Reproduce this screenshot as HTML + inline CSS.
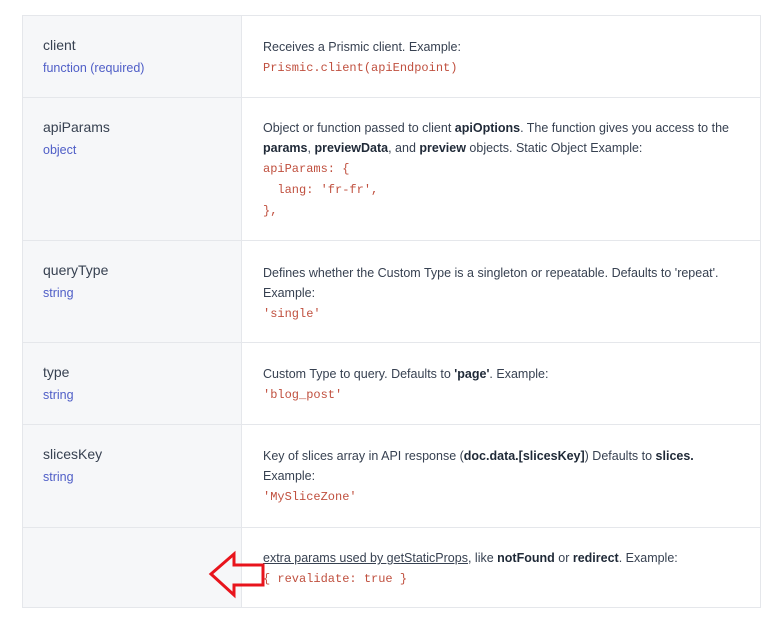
<!DOCTYPE html>
<html><head><style>
body{margin:0;background:#fff;width:782px;height:629px;position:relative;font-family:"Liberation Sans",sans-serif;overflow:hidden}
.t{position:absolute;left:22px;top:15px;width:739px;height:593px;border:1px solid #e5e7eb;box-sizing:border-box}
.l{position:absolute;left:22px;width:220px;background:#f6f7f9;border-right:1px solid #e5e7eb;box-sizing:border-box}
.h{position:absolute;left:22px;width:739px;height:1px;background:#e5e7eb}
.n{position:absolute;left:43px;font-size:14px;color:#374151}
.ty{position:absolute;left:43px;font-size:12.5px;color:#4f5ec7}
.d{position:absolute;left:263px;width:476px;font-size:12.5px;line-height:20px;color:#374151}
.d b{color:#1f2937}
code{font-family:"Liberation Mono",monospace;font-size:12px;color:#c0503f;white-space:pre}
</style></head><body>
<div class="l" style="top:15px;height:593px"></div>
<div class="t"></div>
<div class="h" style="top:97px"></div>
<div class="h" style="top:240px"></div>
<div class="h" style="top:342px"></div>
<div class="h" style="top:424px"></div>
<div class="h" style="top:527px"></div>

<div class="n" style="top:37px">client</div>
<div class="ty" style="top:61px">function (required)</div>
<div class="d" style="top:37px">Receives a Prismic client. Example:<br><code>Prismic.client(apiEndpoint)</code></div>

<div class="n" style="top:119px">apiParams</div>
<div class="ty" style="top:143px">object</div>
<div class="d" style="top:118px">Object or function passed to client <b>apiOptions</b>. The function gives you access to the <b>params</b>, <b>previewData</b>, and <b>preview</b> objects. Static Object Example:<br><code>apiParams: {
  lang: 'fr-fr',
},</code></div>

<div class="n" style="top:262px">queryType</div>
<div class="ty" style="top:286px">string</div>
<div class="d" style="top:263px">Defines whether the Custom Type is a singleton or repeatable. Defaults to 'repeat'. Example:<br><code>'single'</code></div>

<div class="n" style="top:364px">type</div>
<div class="ty" style="top:388px">string</div>
<div class="d" style="top:364px">Custom Type to query. Defaults to <b>'page'</b>. Example:<br><code>'blog_post'</code></div>

<div class="n" style="top:446px">slicesKey</div>
<div class="ty" style="top:470px">string</div>
<div class="d" style="top:446px">Key of slices array in API response (<b>doc.data.[slicesKey]</b>) Defaults to <b>slices.</b> Example:<br><code>'MySliceZone'</code></div>

<div class="d" style="top:548px"><span style="text-decoration:underline">extra params used by getStaticProps</span>, like <b>notFound</b> or <b>redirect</b>. Example:<br><code>{ revalidate: true }</code></div>

<svg style="position:absolute;left:0;top:0" width="782" height="629"><polygon points="211,574 234,554 234,565 263,565 263,585 234,585 234,595" fill="none" stroke="#e8141c" stroke-width="3" stroke-linejoin="miter"/></svg>
</body></html>
